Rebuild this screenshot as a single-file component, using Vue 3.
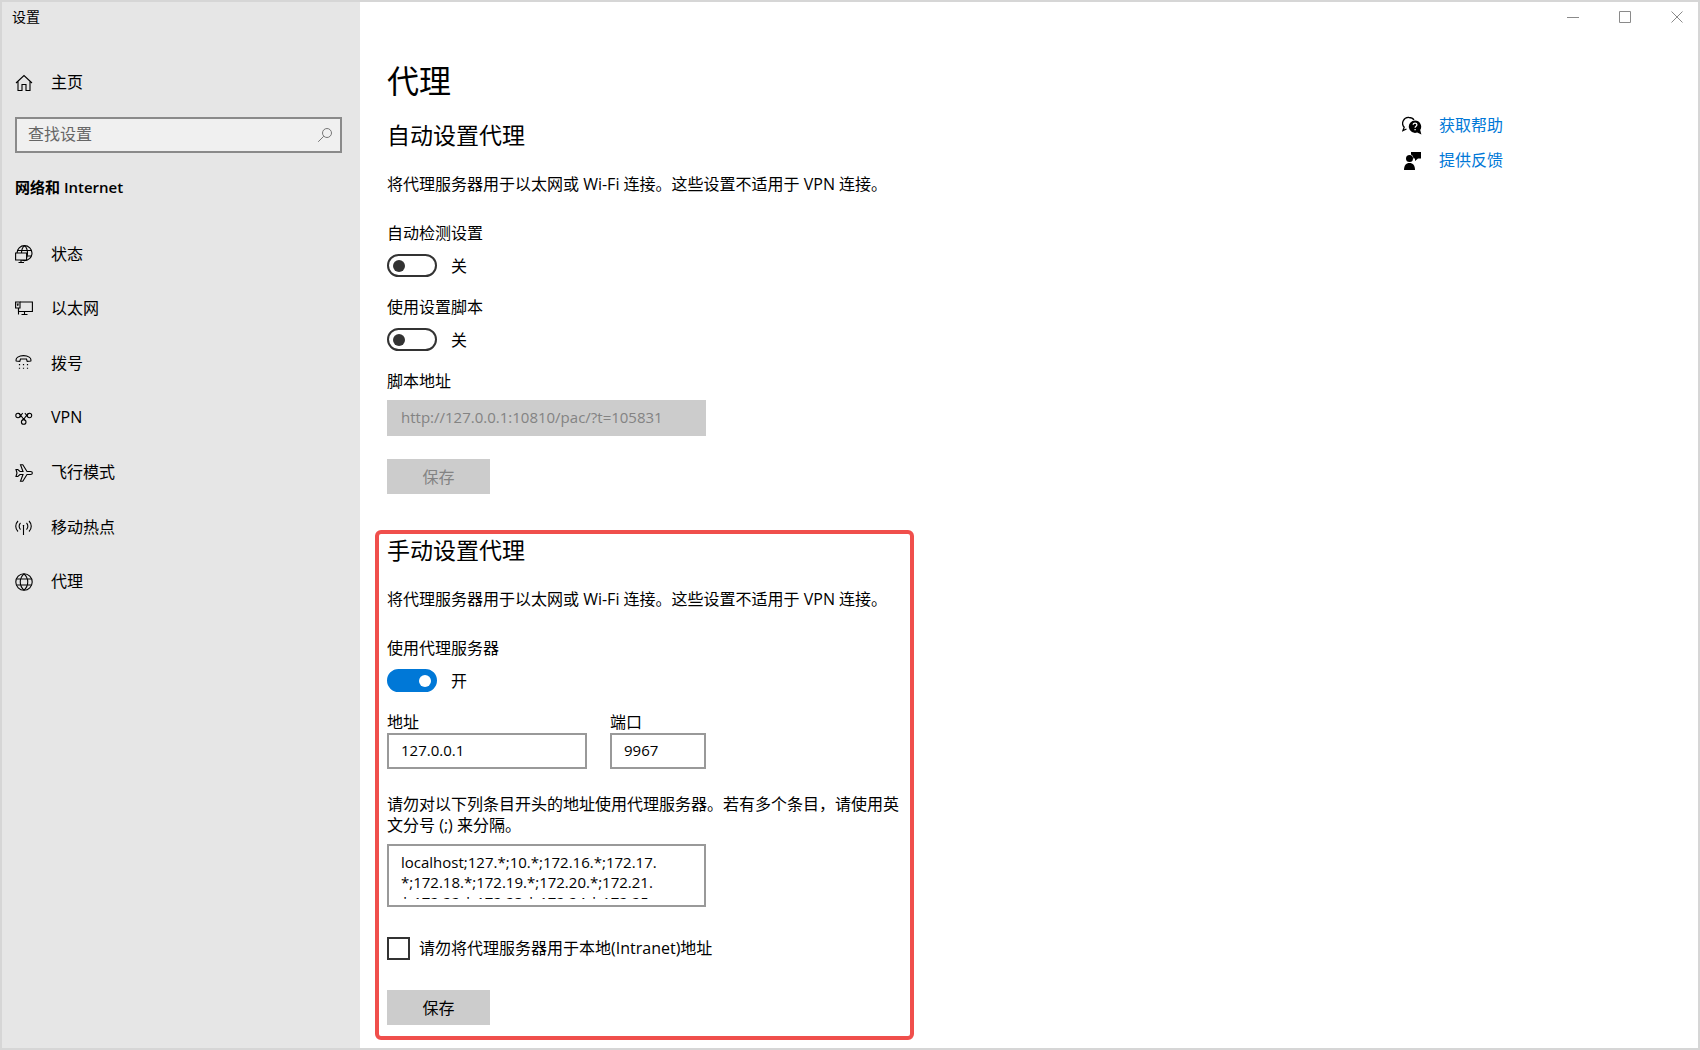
<template>
	<div class="window">
		<aside class="sidebar">
			<div class="app-title">设置</div>
			<a class="nav-link home" href="#">
				<svg class="icon" viewBox="0 0 18 18">
					<path d="M1 9 9 1.500l8 7.500M3 7.500v9h4v-6h4v6h4v-9" />
				</svg>
				<span>主页</span>
			</a>
			<div class="search">
				<input type="text" v-model="query" placeholder="查找设置" aria-label="查找设置" />
				<svg class="search-icon" viewBox="0 0 16 16">
					<circle cx="10" cy="6" r="4.500" />
					<path d="M6.800 9.200 1.200 14.800" />
				</svg>
			</div>
			<h2 class="category">网络和 Internet</h2>
			<nav class="nav">
				<a v-for="item in navItems" :key="item.label" class="nav-link" href="#">
					<svg class="icon" viewBox="0 0 18 18">
						<path v-for="d in item.paths" :key="d" :d="d" />
						<path v-if="item.front" class="front" :d="item.front" />
					</svg>
					<span>{{ item.label }}</span>
				</a>
			</nav>
		</aside>

		<main class="main">
			<div class="window-controls">
				<button type="button" aria-label="最小化">
					<svg viewBox="0 0 12 12"><path d="M0 6.500h12" /></svg>
				</button>
				<button type="button" aria-label="最大化">
					<svg viewBox="0 0 12 12"><path d="M.5.5h11v11H.5z" /></svg>
				</button>
				<button type="button" aria-label="关闭">
					<svg viewBox="0 0 12 12"><path d="m.5.5 11 11m0-11-11 11" /></svg>
				</button>
			</div>

			<div class="columns">
				<div class="content">
					<section class="section">
						<h1>代理</h1>
						<h2>自动设置代理</h2>
						<p class="intro">将代理服务器用于以太网或 Wi-Fi 连接。这些设置不适用于 VPN 连接。</p>

						<label for="auto-detect">自动检测设置</label>
						<div class="toggle-row">
							<input id="auto-detect" v-model="autoDetect" class="toggle" type="checkbox" role="switch" />
							<span>{{ autoDetect ? '开' : '关' }}</span>
						</div>

						<label for="use-script">使用设置脚本</label>
						<div class="toggle-row">
							<input id="use-script" v-model="useScript" class="toggle" type="checkbox" role="switch" />
							<span>{{ useScript ? '开' : '关' }}</span>
						</div>

						<label for="script-url">脚本地址</label>
						<input id="script-url" v-model="scriptUrl" class="field script-url" type="text" :disabled="!useScript" />
						<button class="save" type="button" :disabled="!useScript">保存</button>
					</section>

					<section class="section manual">
						<h2>手动设置代理</h2>
						<p class="intro">将代理服务器用于以太网或 Wi-Fi 连接。这些设置不适用于 VPN 连接。</p>

						<label for="use-proxy">使用代理服务器</label>
						<div class="toggle-row">
							<input id="use-proxy" v-model="useProxy" class="toggle" type="checkbox" role="switch" />
							<span>{{ useProxy ? '开' : '关' }}</span>
						</div>

						<div class="address-row">
							<div class="address">
								<label for="address">地址</label>
								<input id="address" v-model="address" class="field" type="text" />
							</div>
							<div class="port">
								<label for="port">端口</label>
								<input id="port" v-model="port" class="field" type="text" />
							</div>
						</div>

						<label class="hint" for="exceptions">请勿对以下列条目开头的地址使用代理服务器。若有多个条目，请使用英文分号 (;) 来分隔。</label>
						<div class="exceptions">
							<textarea id="exceptions" v-model="exceptions" spellcheck="false"></textarea>
						</div>

						<div class="check-row">
							<input id="bypass-local" v-model="bypassLocal" type="checkbox" />
							<label for="bypass-local">请勿将代理服务器用于本地(Intranet)地址</label>
						</div>
						<button class="save" type="button">保存</button>
					</section>
				</div>

				<div class="help">
					<a href="#">
						<svg viewBox="0 0 20 20">
							<path
								d="M4.500 13 1 14.500l1.200-3.300A5.800 5.800 0 0 1 7 1.500c2 0 3.900.8 5 2.500"
								fill="none" stroke="#000" stroke-width="1.300"
							/>
							<path d="M13 4.500a6.200 6.200 0 0 1 5.200 9.500l1.200 4.500-4.200-2A6.200 6.200 0 1 1 13 4.500z" />
							<path
								d="M11.200 8.800c0-2.200 3.700-2.100 3.700 0 0 1.400-1.800 1.400-1.800 2.900m0 1.200v1.400"
								fill="none" stroke="#fff" stroke-width="1.300"
							/>
						</svg>
						<span>获取帮助</span>
					</a>
					<a href="#">
						<svg viewBox="0 0 20 20">
							<path d="M9 1h10v6.500h-3L13 10V7.500h-1.500A4.500 4.500 0 0 0 9 3.500z" />
							<circle cx="7.500" cy="7.500" r="3.500" />
							<path d="M2 19c0-4.500 2-7 5.500-7s5.500 2.500 5.500 7z" />
						</svg>
						<span>提供反馈</span>
					</a>
				</div>
			</div>
		</main>
	</div>
</template>

<script setup>
import { ref } from 'vue';

const query = ref('');
const autoDetect = ref(false);
const useScript = ref(false);
const scriptUrl = ref('http://127.0.0.1:10810/pac/?t=105831');
const useProxy = ref(true);
const address = ref('127.0.0.1');
const port = ref('9967');
const exceptions = ref(
	'localhost;127.*;10.*;172.16.*;172.17.\n*;172.18.*;172.19.*;172.20.*;172.21.\n*;172.22.*;172.23.*;172.24.*;172.25.'
);
const bypassLocal = ref(false);

const navItems = [
	{
		label: '状态',
		paths: [
			'M9.500.6a7.500 7.500 0 1 1 0 15 7.500 7.500 0 0 1 0-15z',
			'M9.500.6c-4 3.500-4 11.500 0 15M9.500.6c4 3.500 4 11.500 0 15M3 5.500h13M3 11h13',
			'M6 15v2.500M3.500 17.500h5.500',
		],
		front: 'M.6 8h11v7H.6z',
	},
	{
		label: '以太网',
		paths: ['M5 2h12.400v9.500H3.500V8', 'M.6 2h4.400v6H.6zM1.800 4h2M2.800 4v2', 'M3.500 8v6.500M9.500 11.500v3M6.500 14.500h6'],
	},
	{
		label: '拨号',
		paths: [
			'M1.200 7C.2 3.800 4 1.600 8.500 1.600S16.800 3.800 15.800 7l-3.600.3-.7-2.300h-6l-.7 2.300z',
			'M3.900 10.600h1.200M7.900 10.600h1.200M11.900 10.600h1.200M3.900 14.200h1.200M7.900 14.200h1.200M11.900 14.200h1.200',
		],
	},
	{
		label: 'VPN',
		paths: [
			'M5.200 6.500a2.200 2.200 0 1 1-4.400 0 2.200 2.200 0 0 1 4.400 0zM16.700 6.500a2.200 2.200 0 1 1-4.400 0 2.200 2.200 0 0 1 4.400 0zM11 13a2.300 2.300 0 1 1-4.600 0A2.300 2.300 0 0 1 11 13z',
			'M3 4.300c3 0 3.500 5.500 7.200 7M14.500 4.300c-3 0-4 5.500-7.500 7M4.800 8c1.500-1 1.500-3 3-3.700M12.800 8c-1.500-1-1.500-3-3-3.700',
		],
	},
	{
		label: '飞行模式',
		paths: ['M1 5.500h1.800L5 7.500h3L5.500.700h2.300L12 7.500h3.500c2.500 0 2.500 3 0 3H12l-4.200 6.800H5.500L8 10.500H5l-2.200 2H1L2 9z'],
	},
	{
		label: '移动热点',
		paths: [
			'M3 3C0 6 0 10.500 3 13.500M5.500 5c-1.800 1.800-1.800 4.800 0 6.600M14 3c3 3 3 7.500 0 10.500M11.500 5c1.800 1.800 1.800 4.800 0 6.600',
			'M8.500 7.500V17M7.800 7.500h1.400',
		],
	},
	{
		label: '代理',
		paths: [
			'M9 .8a8.200 8.200 0 1 1 0 16.400A8.200 8.200 0 0 1 9 .8z',
			'M9 .8c-5 4.500-5 12 0 16.400M9 .8c5 4.500 5 12 0 16.400M1.800 6h14.400M1.800 12h14.400',
		],
	},
];
</script>

<style>
body {
	margin: 0;
}
</style>

<style scoped>
.window {
	display: grid;
	grid-template-columns: 358px 1fr;
	min-height: 100vh;
	box-sizing: border-box;
	border: 2px solid #d6d6d6;
	background: #fff;
	color: #000;
	font-family: 'Open Sans', 'Noto Sans CJK SC', sans-serif;
	font-size: 16px;
	line-height: 21px;
}

h1,
h2,
p {
	margin: 0;
	font-weight: 400;
}

input,
textarea,
button {
	box-sizing: border-box;
	margin: 0;
	font-family: inherit;
	color: inherit;
}

/* sidebar */
.sidebar {
	padding: 4px 18px 0 13px;
	background: #e6e6e6;
}

.app-title {
	margin-left: -3px;
	font-size: 14px;
}

.nav-link {
	display: flex;
	align-items: center;
	gap: 18px;
	color: #000;
	text-decoration: none;
}

.icon {
	width: 18px;
	height: 18px;
	fill: none;
	stroke: #000;
	stroke-width: 1.1;
}

.icon .front {
	fill: #e6e6e6;
}

.home {
	margin-top: 45px;
}

.search {
	display: flex;
	align-items: center;
	box-sizing: border-box;
	height: 36px;
	margin-top: 24px;
	padding: 0 7px 0 11px;
	border: 2px solid #8a8a8a;
	background: #f0f0f0;
}

.search input {
	flex: 1;
	min-width: 0;
	padding: 0 0 2px;
	border: 0;
	outline: 0;
	background: none;
	font-size: 16px;
}

.search input::placeholder {
	color: #666;
	opacity: 1;
}

.search-icon {
	width: 16px;
	height: 16px;
	fill: none;
	stroke: #777;
}

.category {
	margin-top: 24px;
	font-size: 15px;
	font-weight: 600;
}

.nav {
	display: grid;
	grid-auto-rows: 1fr;
	height: 382px;
	margin-top: 29px;
}

/* main area */
.main {
	display: flex;
	flex-direction: column;
}

.window-controls {
	display: flex;
	justify-content: flex-end;
	height: 30px;
}

.window-controls button {
	display: flex;
	align-items: center;
	justify-content: center;
	width: 52px;
	padding: 0;
	border: 0;
	background: none;
}

.window-controls button:last-child {
	width: 42px;
	margin-left: 5px;
}

.window-controls svg {
	width: 12px;
	height: 12px;
	fill: none;
	stroke: #8a8a8a;
}

.columns {
	display: flex;
	justify-content: space-between;
	padding: 29px 0 8px 15px;
}

.content {
	flex: 0 1 539px;
}

.section {
	display: flex;
	flex-direction: column;
	align-items: flex-start;
	padding: 0 12px;
}

h1 {
	margin-bottom: 18px;
	font-size: 32px;
	line-height: 40px;
}

.section h2 {
	font-size: 23px;
	line-height: 32px;
}

.intro {
	margin: 23px 0 28px;
}

.toggle-row {
	display: flex;
	align-items: center;
	gap: 14px;
	height: 23px;
	margin: 10px 0 20px;
}

.toggle-row span {
	padding-top: 2px;
}

.toggle {
	display: flex;
	align-items: center;
	width: 50px;
	height: 23px;
	padding: 0 4px;
	border: 2px solid #333;
	border-radius: 12px;
	appearance: none;
	background: #fff;
}

.toggle::before {
	width: 12px;
	height: 12px;
	border-radius: 50%;
	background: #333;
	content: '';
}

.toggle:checked {
	justify-content: flex-end;
	border-color: #0078d7;
	background: #0078d7;
}

.toggle:checked::before {
	background: #fff;
}

.field {
	display: block;
	width: 100%;
	height: 36px;
	padding: 0 12px 3px;
	border: 2px solid #999;
	background: #fff;
	font-size: 15px;
}

.script-url {
	width: 319px;
	margin-top: 8px;
}

.field:disabled {
	border-color: #ccc;
	background: #ccc;
	color: #838383;
}

.save {
	width: 103px;
	height: 35px;
	margin-top: 23px;
	padding: 0 0 2px;
	border: 0;
	background: #ccc;
	font-size: 16px;
}

.save:disabled {
	color: #838383;
}

.manual {
	margin-top: 36px;
	padding: 0 8px 11px;
	border: 4px solid #f04f4c;
	border-radius: 6px;
}

.manual .save {
	margin-top: 30px;
}

.address-row {
	display: flex;
	gap: 23px;
}

.address-row label {
	display: block;
}

.address {
	width: 200px;
}

.port {
	width: 96px;
}

.hint {
	margin-top: 25px;
}

.exceptions {
	box-sizing: border-box;
	width: 319px;
	height: 63px;
	margin-top: 8px;
	padding: 6px 12px;
	border: 2px solid #999;
}

.exceptions textarea {
	display: block;
	width: 100%;
	height: 100%;
	padding: 0;
	border: 0;
	outline: 0;
	resize: none;
	overflow: hidden;
	background: none;
	font-size: 15px;
	line-height: 20px;
}

.check-row {
	display: flex;
	align-items: center;
	gap: 9px;
	margin-top: 30px;
}

.check-row input {
	width: 23px;
	height: 23px;
	border: 2px solid #333;
	appearance: none;
}

.check-row input:checked {
	background: #0078d7;
}

/* help links */
.help {
	display: flex;
	flex-direction: column;
	gap: 14px;
	width: 296px;
	padding-top: 54px;
}

.help a {
	display: flex;
	align-items: center;
	gap: 17px;
	color: #0078d7;
	text-decoration: none;
}

.help svg {
	width: 20px;
	height: 20px;
}
</style>
